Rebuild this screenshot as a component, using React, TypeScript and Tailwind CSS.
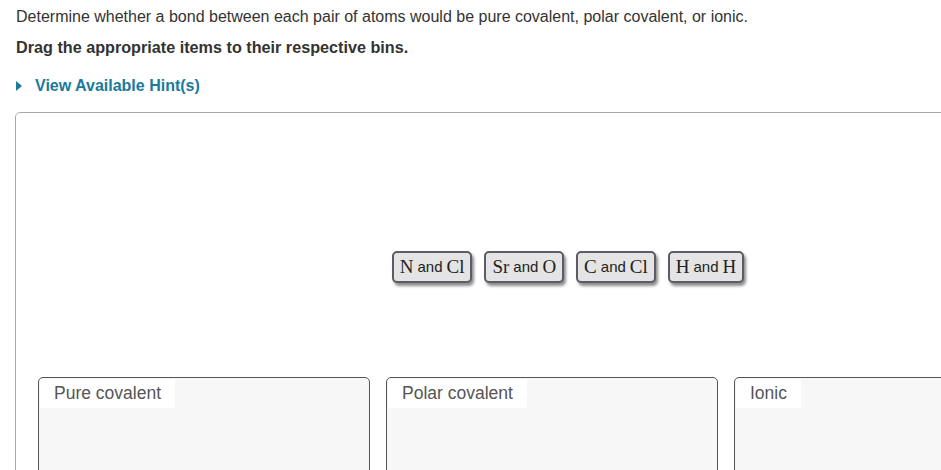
import React from 'react';

const tiles: [string, string][] = [
  ['N', 'Cl'],
  ['Sr', 'O'],
  ['C', 'Cl'],
  ['H', 'H'],
];

const bins = ['Pure covalent', 'Polar covalent', 'Ionic'];

function Tile({ a, b }: { a: string; b: string }) {
  return (
    <div className="flex items-center h-[32px] px-[6px] bg-[#e4e4e4] border-2 border-[#5c5c66] rounded-[5px] shadow-[2px_3px_3px_rgba(0,0,0,0.45)] text-[#222]">
      <span className="font-['Liberation_Serif',serif] text-[19px]">{a}</span>
      <span className="font-['Liberation_Sans',sans-serif] text-[15px] mx-[4px]">and</span>
      <span className="font-['Liberation_Serif',serif] text-[19px]">{b}</span>
    </div>
  );
}

export default function App() {
  return (
    <div className="w-[941px] h-[470px] overflow-hidden bg-white font-['Liberation_Sans',Arial,sans-serif] pl-[16px] pt-[6px]">
      <p className="text-[16px] leading-[21px] text-[#333]">
        Determine whether a bond between each pair of atoms would be pure covalent, polar covalent, or ionic.
      </p>
      <p className="mt-[10px] text-[16.2px] leading-[21px] font-bold text-[#333]">
        Drag the appropriate items to their respective bins.
      </p>
      <button className="mt-[17px] flex items-center gap-[13px] text-[16px] leading-[21px] font-bold text-[#1a7a9c]">
        <svg width="6" height="10" viewBox="0 0 6 10">
          <path d="M0 0 L6 5 L0 10 Z" fill="#1a7a9c" />
        </svg>
        View Available Hint(s)
      </button>
      <div className="mt-[16px] -ml-px w-[1106px] h-[400px] border border-[#aaa] rounded-tl-[5px]">
        <div className="flex justify-center gap-[12px] mt-[138px]">
          {tiles.map(([a, b]) => (
            <Tile key={a + b} a={a} b={b} />
          ))}
        </div>
        <div className="flex gap-[16px] pl-[22px] mt-[94px]">
          {bins.map((label) => (
            <div key={label} className="w-[332px] h-[150px] shrink-0 bg-[#f7f7f7] border border-[#555] rounded-[5px]">
              <div className="inline-block bg-white mt-px ml-px px-[14px] h-[29px] text-[17.5px] leading-[29px] text-[#555]">
                {label}
              </div>
            </div>
          ))}
        </div>
      </div>
    </div>
  );
}
